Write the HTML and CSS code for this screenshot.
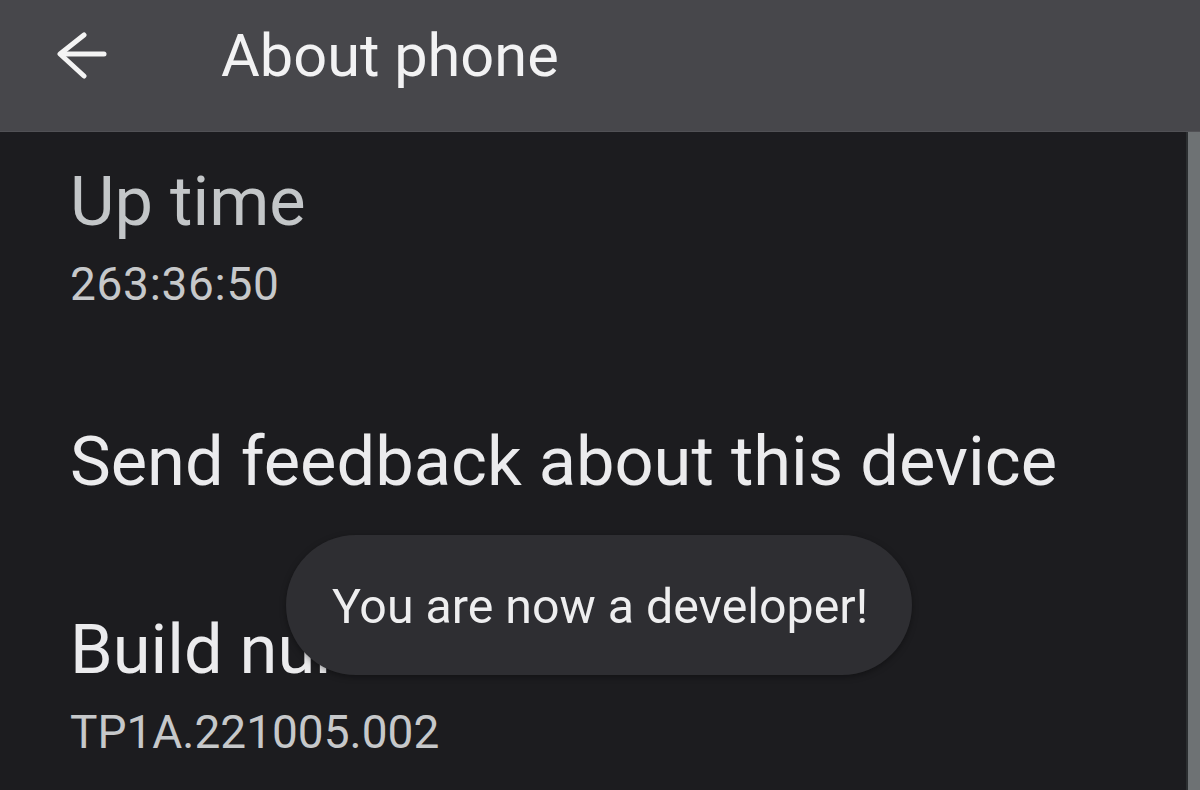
FILE: index.html
```html
<!DOCTYPE html>
<html lang="en">
<head>
<meta charset="utf-8">
<title>About phone</title>
<link rel="stylesheet" href="styles.css">
</head>
<body>
<div class="screen">
  <header class="appbar">
    <svg class="back" width="50" height="50" viewBox="0 0 50 50" aria-hidden="true">
      <polyline points="27,5 3,24 27,46" fill="none" stroke="#f4f4f4" stroke-width="5" stroke-linecap="round" stroke-linejoin="round"/>
      <line x1="5" y1="24" x2="47" y2="24" stroke="#f4f4f4" stroke-width="5" stroke-linecap="round"/>
    </svg>
    <h1 class="title">About phone</h1>
  </header>
  <div class="body">
    <main class="list">
      <div class="item">
        <div class="item-title dim">Up time</div>
        <div class="item-summary wide">263:36:50</div>
      </div>
      <div class="item">
        <div class="item-title">Send feedback about this device</div>
      </div>
      <div class="item">
        <div class="item-title">Build number</div>
        <div class="item-summary">TP1A.221005.002</div>
      </div>
    </main>
    <div class="scrollbar"></div>
    <div class="toast">You are now a developer!</div>
  </div>
</div>
</body>
</html>
```

FILE: styles.css
```css
html, body {
  margin: 0;
  padding: 0;
  width: 1200px;
  height: 790px;
  overflow: hidden;
  background: #1c1c1f;
}

.screen {
  display: flex;
  flex-direction: column;
  width: 1200px;
  height: 790px;
  font-family: Roboto, "Liberation Sans", sans-serif;
}

.appbar {
  flex: 0 0 132px;
  box-sizing: border-box;
  height: 132px;
  display: flex;
  align-items: flex-start;
  padding: 30px 0 0 57px;
  background: #47474b;
  border-bottom: 1px solid #515155;
}

.back {
  display: block;
  flex: 0 0 50px;
}

.title {
  margin: -3px 0 0 114px;
  font-size: 59.5px;
  line-height: 59px;
  font-weight: 400;
  color: #f2f2f3;
}

.body {
  position: relative;
  flex: 1;
  display: flex;
  background: #1c1c1f;
}

.list {
  flex: 1;
  display: flex;
  flex-direction: column;
  gap: 121px;
  padding: 36px 0 0 70px;
}

.item {
  display: flex;
  flex-direction: column;
}

.item-title {
  font-size: 68.6px;
  line-height: 67px;
  color: #ebebed;
  white-space: nowrap;
}

.item-title.dim {
  color: #c3c6c8;
}

.item-summary {
  margin-top: 26px;
  font-size: 46px;
  line-height: 46px;
  color: #c6c8ca;
}

.item-summary.wide {
  letter-spacing: 0.7px;
}

.scrollbar {
  flex: 0 0 12px;
  background: #6e7274;
  border-left: 2px solid #2b2e30;
}

.toast {
  position: absolute;
  left: 286px;
  top: 403px;
  width: 626px;
  height: 140px;
  box-sizing: border-box;
  border-radius: 70px;
  background: #2e2e32;
  box-shadow: 0 2px 6px rgba(0, 0, 0, 0.35);
  display: flex;
  align-items: center;
  justify-content: center;
  padding-top: 2px;
  padding-left: 2px;
  font-size: 48.3px;
  color: #eeeeef;
  white-space: nowrap;
}
```
